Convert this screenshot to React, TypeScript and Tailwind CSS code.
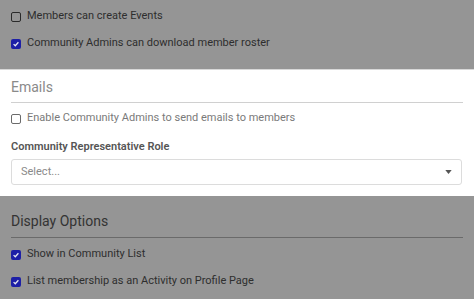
import React from "react";

function Box({ checked, tone }: { checked?: boolean; tone: "gray" | "white" }) {
  if (checked) {
    return (
      <span className="flex h-[10px] w-[10px] shrink-0 items-center justify-center rounded-[2px] bg-[#1d1fa6]">
        <svg viewBox="0 0 10 10" className="h-[8px] w-[8px]">
          <path d="M2 5.2 L4.1 7.2 L8 2.8" fill="none" stroke="#e8e8f0" strokeWidth="1.6" />
        </svg>
      </span>
    );
  }
  return (
    <span
      className={
        tone === "gray"
          ? "h-[10px] w-[10px] shrink-0 rounded-[2px] border border-[#2a2a2a]"
          : "h-[10px] w-[10px] shrink-0 rounded-[2px] border border-[#6b6b6b]"
      }
    />
  );
}

function Row({ checked, tone, text }: { checked?: boolean; tone: "gray" | "white"; text: string }) {
  return (
    <div className="flex h-[17px] items-center gap-[6px]">
      <Box checked={checked} tone={tone} />
      <span className={tone === "gray" ? "text-[11px] text-[#2e2e2e]" : "text-[11px] text-[#7a7a7a]"}>{text}</span>
    </div>
  );
}

export default function App() {
  return (
    <div className="w-[474px] h-[299px] overflow-hidden" style={{ fontFamily: "Roboto, 'Liberation Sans', sans-serif" }}>
      <div className="flex h-[69px] flex-col gap-[10px] bg-[#959595] px-[11px] pt-[8px]">
        <Row tone="gray" text="Members can create Events" />
        <Row tone="gray" checked text="Community Admins can download member roster" />
      </div>
      <div className="flex h-[127px] flex-col border-t border-[#d8d8d8] bg-white px-[11px]">
        <div className="mt-[7px] border-b border-[#d0d0d0] pb-[5px] text-[14px] leading-[20px] text-[#8a8a8a]">Emails</div>
        <div className="mt-[7px]">
          <Row tone="white" text="Enable Community Admins to send emails to members" />
        </div>
        <div className="mt-[12px] text-[11px] font-semibold leading-[16px] text-[#555]">Community Representative Role</div>
        <div className="mt-[4px] flex h-[26px] w-[451px] items-center justify-between rounded-[3px] border border-[#dcdcdc] px-[9px]">
          <span className="text-[11px] text-[#8a8a8a]">Select...</span>
          <svg viewBox="0 0 8 5" className="h-[4px] w-[7px]">
            <path d="M0 0 L8 0 L4 5 Z" fill="#555" />
          </svg>
        </div>
      </div>
      <div className="flex h-[103px] flex-col bg-[#959595] px-[11px]">
        <div className="mt-[14px] border-b border-[#6a6a6a] pb-[5px] text-[14px] leading-[22px] text-[#333]">Display Options</div>
        <div className="mt-[8px] flex flex-col gap-[10px]">
          <Row tone="gray" checked text="Show in Community List" />
          <Row tone="gray" checked text="List membership as an Activity on Profile Page" />
        </div>
      </div>
    </div>
  );
}
